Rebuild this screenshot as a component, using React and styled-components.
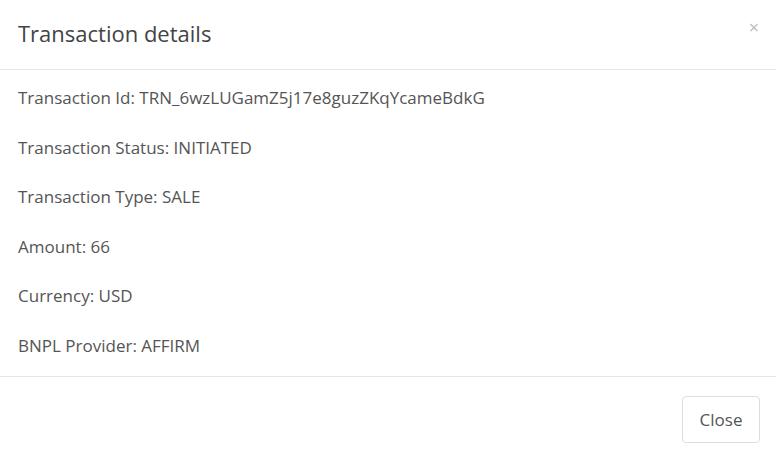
import styled, { createGlobalStyle } from 'styled-components';

const GlobalStyle = createGlobalStyle`
	html, body {
		margin: 0;
		padding: 0;
		background: #fff;
	}
	body {
		font-family: 'Open Sans', 'Liberation Sans', sans-serif;
		color: #555;
	}
`;

const Modal = styled.div`
	width: 776px;
	height: 450px;
	background: #fff;
	display: flex;
	flex-direction: column;
	overflow: hidden;
`;

const Header = styled.div`
	position: relative;
	flex-shrink: 0;
	height: 70px;
	box-sizing: border-box;
	padding: 0 18px;
	display: flex;
	align-items: center;
	border-bottom: 1px solid #e5e5e5;
`;

const Title = styled.h4`
	margin: -4px 0 0;
	font-size: 22px;
	font-weight: 400;
	color: #444;
`;

const CloseX = styled.button`
	position: absolute;
	top: 18px;
	right: 17px;
	border: none;
	background: none;
	padding: 0;
	font-size: 18px;
	line-height: 1;
	color: #bbb;
	cursor: pointer;
	font-family: 'Open Sans', sans-serif;
`;

const Body = styled.div`
	flex-shrink: 0;
	padding: 16px 18px 0;
	height: 307px;
	box-sizing: border-box;
	border-bottom: 1px solid #e5e5e5;
`;

const Line = styled.p`
	margin: 0 0 25.6px;
	font-size: 17px;
	line-height: 24px;
	color: #555;
`;

const Footer = styled.div`
	display: flex;
	justify-content: flex-end;
	padding: 19px 16px;
`;

const Button = styled.button`
	font-family: 'Open Sans', sans-serif;
	font-size: 17px;
	color: #555;
	background: #fff;
	border: 1px solid #ddd;
	border-radius: 4px;
	width: 78px;
	height: 47px;
	padding: 0;
	cursor: pointer;
`;

const rows = [
	'Transaction Id: TRN_6wzLUGamZ5j17e8guzZKqYcameBdkG',
	'Transaction Status: INITIATED',
	'Transaction Type: SALE',
	'Amount: 66',
	'Currency: USD',
	'BNPL Provider: AFFIRM',
];

export default function App() {
	return (
		<>
			<GlobalStyle />
			<Modal>
				<Header>
					<Title>Transaction details</Title>
					<CloseX aria-label='Close'>×</CloseX>
				</Header>
				<Body>
					{rows.map((r) => (
						<Line key={r}>{r}</Line>
					))}
				</Body>
				<Footer>
					<Button>Close</Button>
				</Footer>
			</Modal>
		</>
	);
}
